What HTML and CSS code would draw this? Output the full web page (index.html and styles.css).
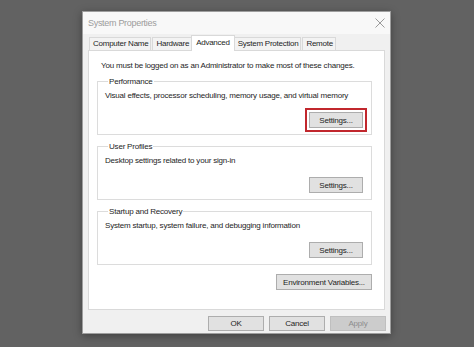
FILE: index.html
```html
<!DOCTYPE html>
<html lang="en">
<head>
  <meta charset="UTF-8">
  <title>System Properties</title>
  <link rel="stylesheet" href="styles.css">
</head>
<body>
  <div class="dialog">
    <div class="titlebar">
      <span class="title">System Properties</span>
      <svg class="close" width="10" height="10" viewBox="0 0 10 10">
        <path d="M0.5 0.5 L9.5 9.5 M9.5 0.5 L0.5 9.5" stroke="#9a9a9a" stroke-width="1" fill="none"/>
      </svg>
    </div>

    <div class="tabs">
      <div class="tab">Computer Name</div>
      <div class="tab">Hardware</div>
      <div class="tab active">Advanced</div>
      <div class="tab">System Protection</div>
      <div class="tab">Remote</div>
    </div>

    <div class="panel">
      <p class="note">You must be logged on as an Administrator to make most of these changes.</p>

      <fieldset class="group">
        <legend>Performance</legend>
        <p class="group-text">Visual effects, processor scheduling, memory usage, and virtual memory</p>
        <div class="group-actions">
          <button class="btn btn-highlight">Settings...</button>
        </div>
      </fieldset>

      <fieldset class="group">
        <legend>User Profiles</legend>
        <p class="group-text">Desktop settings related to your sign-in</p>
        <div class="group-actions">
          <button class="btn">Settings...</button>
        </div>
      </fieldset>

      <fieldset class="group">
        <legend>Startup and Recovery</legend>
        <p class="group-text">System startup, system failure, and debugging information</p>
        <div class="group-actions">
          <button class="btn">Settings...</button>
        </div>
      </fieldset>

      <div class="env-row">
        <button class="btn btn-env">Environment Variables...</button>
      </div>
    </div>

    <div class="footer">
      <button class="btn btn-footer">OK</button>
      <button class="btn btn-footer">Cancel</button>
      <button class="btn btn-footer" disabled>Apply</button>
    </div>
  </div>
</body>
</html>
```

FILE: styles.css
```css
:root {
  --backdrop: #626262;
  --dialog-bg: #f0f0f0;
  --panel-border: #d9d9d9;
  --group-border: #dcdcdc;
  --btn-bg: #e1e1e1;
  --btn-border: #adadad;
  --text: #1e1e1e;
  --highlight: #c1272d;
}

body {
  margin: 0;
  padding: 11px 0 0 82px;
  background-color: var(--backdrop);
  font-family: 'Liberation Sans', Arial, sans-serif;
  font-size: 8px;
  letter-spacing: -0.2px;
  color: var(--text);
  height: 347px;
  box-sizing: border-box;
  overflow: hidden;
}

.dialog {
  width: 309px;
  height: 323px;
  box-sizing: border-box;
  background-color: var(--dialog-bg);
  border: 1px solid #9e9e9e;
  box-shadow: 0 2px 8px rgba(0, 0, 0, 0.35);
  display: flex;
  flex-direction: column;
}

.titlebar {
  height: 22px;
  background-color: #f8f8f8;
  display: flex;
  align-items: center;
  justify-content: space-between;
  padding: 0 5px 0 5px;
}

.title {
  color: #9c9c9c;
  font-size: 9px;
  letter-spacing: -0.3px;
}

.close {
  display: block;
}

.tabs {
  display: flex;
  align-items: flex-end;
  height: 16px;
  padding: 0 0 0 6px;
}

.tab {
  height: 12px;
  line-height: 12px;
  padding: 0 2px 0 3px;
  border: 1px solid var(--panel-border);
  border-bottom: none;
  margin-right: 1px;
  background-color: #f3f3f3;
  white-space: nowrap;
  letter-spacing: -0.25px;
}

.tab.active {
  height: 15px;
  line-height: 13px;
  background-color: #fff;
  padding: 0 4px 0 4px;
  margin: 0 0 -1px -2px;
  position: relative;
  z-index: 1;
}

.tab.active + .tab {
  margin-left: -1px;
}

.panel {
  margin: 0 5px;
  height: 260px;
  box-sizing: border-box;
  background-color: #fff;
  border: 1px solid var(--panel-border);
  padding: 9px 12px 0 8px;
}

.note {
  margin: 0 0 0 4px;
  line-height: 11px;
}

.group {
  margin: 5px 0 0 0;
  padding: 0 8px 6px 7px;
  border: 1px solid var(--group-border);
}

.group + .group {
  margin-top: 6px;
}

.group legend {
  padding: 0 1px;
  margin-left: 3px;
  line-height: 11px;
}

.group-text {
  margin: 3px 0 0 0;
  line-height: 11px;
}

.group-actions {
  display: flex;
  justify-content: flex-end;
  margin-top: 11px;
}

.btn {
  font-family: inherit;
  font-size: 8px;
  letter-spacing: -0.2px;
  color: var(--text);
  background-color: var(--btn-bg);
  border: 1px solid var(--btn-border);
  border-radius: 0;
  height: 16px;
  width: 54px;
  padding: 0;
  margin: 0;
}

.btn-highlight {
  outline: 2px solid var(--highlight);
  outline-offset: 2px;
}

.env-row {
  display: flex;
  justify-content: flex-end;
  margin-top: 9px;
}

.btn-env {
  width: 96px;
}

.footer {
  display: flex;
  justify-content: flex-end;
  gap: 5px;
  padding: 6px 4px 0 0;
}

.btn-footer {
  width: 56px;
  height: 15px;
}

.btn-footer:disabled {
  background-color: #cccccc;
  border-color: #bfbfbf;
  color: #8d8d8d;
}
```
